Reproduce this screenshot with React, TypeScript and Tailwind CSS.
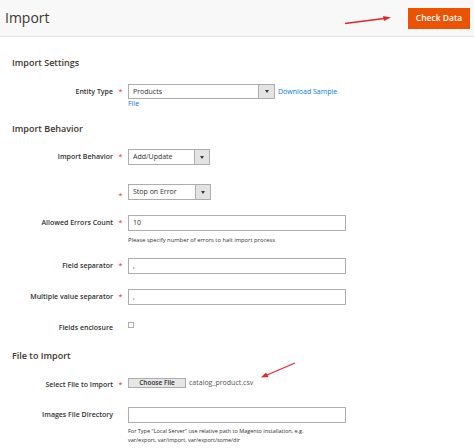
import React from "react"

const Asterisk = ({ className = "leading-[16px]" }: { className?: string }) => (
  <span className={`h-[16px] w-[15px] shrink-0 text-center text-[7px] text-[#e22626] ${className}`}>*</span>
)

function Label({ text, required = true, lh = "leading-[16px]" }: { text: string; required?: boolean; lh?: string }) {
  return (
    <>
      <div className={`w-[101px] shrink-0 text-right text-[7px] font-semibold text-[#303030] ${lh}`}>{text}</div>
      {required ? <Asterisk /> : <span className="w-[15px] shrink-0" />}
    </>
  )
}

function Select({ value, width }: { value: string; width: string }) {
  return (
    <div className={`flex h-[16px] border border-[#adadad] bg-white ${width}`}>
      <div className="flex-1 pl-[4px] text-[7px] leading-[14px] text-[#303030]">{value}</div>
      <div className="flex w-[15px] items-center justify-center border-l border-[#adadad] bg-[#e3e3e3]">
        <span className="block h-0 w-0 border-x-[2px] border-t-[3px] border-x-transparent border-t-[#41362f]" />
      </div>
    </div>
  )
}

function TextInput({ value = "" }: { value?: string }) {
  return (
    <div className="h-[16px] w-[218px] border border-[#adadad] bg-white pl-[4px] text-[7px] leading-[14px] text-[#303030]">
      {value}
    </div>
  )
}

function Heading({ children, className = "" }: { children: React.ReactNode; className?: string }) {
  return <h2 className={`text-[9px] font-semibold leading-[12px] text-[#41362f] ${className}`}>{children}</h2>
}

export default function App() {
  return (
    <div className="relative h-[448px] w-[474px] overflow-hidden bg-white font-['Open_Sans',sans-serif] text-[#303030]">
      {/* Page header */}
      <header className="flex h-[37px] items-center justify-between border-b border-[#e3e3e3] bg-[#f8f8f8] pl-[5px] pr-[4px]">
        <h1 className="text-[14px] leading-none text-[#41362f]">Import</h1>
        <button className="h-[21px] w-[62px] bg-[#eb5202] text-[8.5px] font-semibold text-white">Check Data</button>
      </header>

      <div className="pl-[12px]">
        {/* Import Settings */}
        <Heading className="mt-[20px]">Import Settings</Heading>
        <div className="mt-[15px] flex">
          <div className="w-[101px] shrink-0 text-right text-[7px] font-semibold leading-[15px]">Entity Type</div>
          <span className="w-[15px] shrink-0 text-center text-[7px] leading-[15px] text-[#e22626]">*</span>
          <div>
            <div className="flex items-start">
              <div className="flex h-[15px] w-[147px] border border-[#adadad] bg-white">
                <div className="flex-1 pl-[4px] text-[7px] leading-[13px]">Products</div>
                <div className="flex w-[16px] items-center justify-center border-l border-[#adadad] bg-[#e3e3e3]">
                  <span className="block h-0 w-0 border-x-[2px] border-t-[3px] border-x-transparent border-t-[#41362f]" />
                </div>
              </div>
              <a className="ml-[3px] text-[7px] leading-[15px] text-[#007bdb]">Download Sample</a>
            </div>
            <a className="block text-[7px] leading-[10px] text-[#007bdb]">File</a>
          </div>
        </div>

        {/* Import Behavior */}
        <Heading className="mt-[14px]">Import Behavior</Heading>
        <div className="mt-[14px] flex">
          <Label text="Import Behavior" />
          <Select value="Add/Update" width="w-[82px]" />
        </div>
        <div className="mt-[19px] flex">
          <div className="w-[101px] shrink-0" />
          <Asterisk className="leading-[24px]" />
          <Select value="Stop on Error" width="w-[83px]" />
        </div>
        <div className="mt-[15px] flex">
          <Label text="Allowed Errors Count" />
          <div>
            <TextInput value="10" />
            <p className="mt-[5px] text-[5.8px] leading-[8px]">Please specify number of errors to halt import process</p>
          </div>
        </div>
        <div className="mt-[14px] flex">
          <Label text="Field separator" />
          <TextInput value="," />
        </div>
        <div className="mt-[15px] flex">
          <Label text="Multiple value separator" />
          <TextInput value="," />
        </div>
        <div className="mt-[15px] flex">
          <Label text="Fields enclosure" required={false} />
          <div className="mt-[2px] h-[6px] w-[6px] border border-[#adadad] bg-white" />
        </div>

        {/* File to Import */}
        <Heading className="mt-[14px]">File to Import</Heading>
        <div className="mt-[16px] flex">
          <div className="w-[101px] shrink-0 text-right text-[7px] font-semibold leading-[14px]">Select File to Import</div>
          <span className="w-[15px] shrink-0 text-center text-[7px] leading-[14px] text-[#e22626]">*</span>
          <div className="flex h-[10px] items-center">
            <button className="h-[10px] w-[58px] border border-[#adadad] bg-[#e6e6e6] text-[6.5px] font-semibold leading-[8px] text-[#303030]">
              Choose File
            </button>
            <span className="ml-[3px] text-[7px] leading-[10px] text-[#555]">catalog_product.csv</span>
          </div>
        </div>
        <div className="mt-[15px] flex">
          <Label text="Images File Directory" required={false} />
          <div>
            <TextInput />
            <p className="mt-[4px] text-[5.5px] leading-[9px]">
              For Type "Local Server" use relative path to Magento installation, e.g.
              <br />
              var/export, var/import, var/export/some/dir
            </p>
          </div>
        </div>
      </div>

      {/* Red annotation arrows */}
      <svg className="absolute left-0 top-0" width="474" height="448" viewBox="0 0 474 448">
        <line x1="345" y1="23.5" x2="384" y2="18.5" stroke="#e0252b" strokeWidth="1.3" />
        <polygon points="391,17.6 383,16 384,21" fill="#e0252b" />
        <line x1="295" y1="363" x2="267" y2="375" stroke="#e0252b" strokeWidth="1.3" />
        <polygon points="261,377.5 266,372.5 268.5,377" fill="#e0252b" />
      </svg>
    </div>
  )
}
